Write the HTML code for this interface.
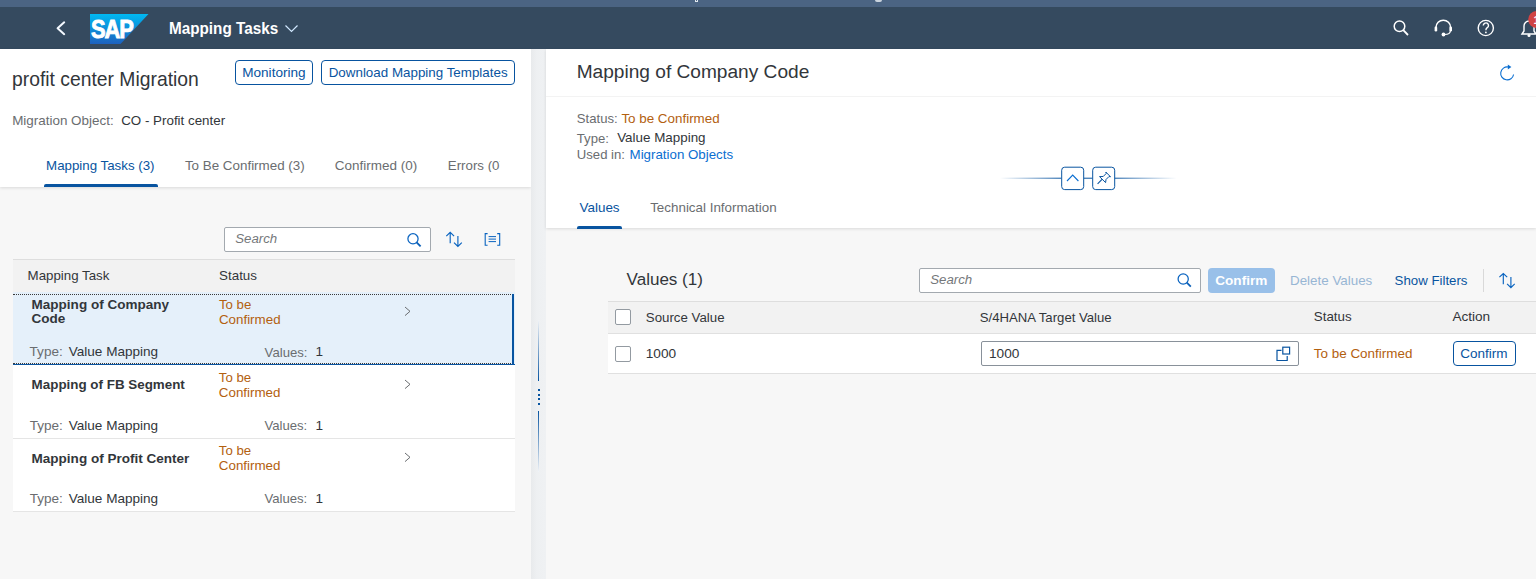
<!DOCTYPE html>
<html><head><meta charset="utf-8">
<style>
html,body{margin:0;padding:0}
body{width:1536px;height:579px;overflow:hidden;position:relative;background:#f7f7f7;font-family:"Liberation Sans",sans-serif}
.a{position:absolute;box-sizing:border-box}
.t{position:absolute;white-space:pre;line-height:1;font-family:"Liberation Sans",sans-serif}
svg{position:absolute;overflow:visible}
</style></head><body>
<!-- top strip & shell bar -->
<div class="a" style="left:0;top:0;width:1536px;height:7px;background:#4b6483"></div>
<div class="a" style="left:695px;top:0;width:3px;height:2px;border:1px solid #dfe6ee;border-top:0"></div>
<div class="a" style="left:875px;top:0;width:7px;height:2px;background:#c9d3de;border-radius:0 0 3px 3px"></div>
<div class="a" style="left:0;top:7px;width:1536px;height:42px;background:#354a5f"></div>
<svg style="left:0;top:0" width="1536" height="49">
  <polyline points="64.2,22.3 57.6,28.3 64.2,34.2" fill="none" stroke="#f4f9ff" stroke-width="2" stroke-linecap="round" stroke-linejoin="round"/>
  <defs><linearGradient id="sapg" x1="0" y1="0" x2="0" y2="1">
    <stop offset="0" stop-color="#00b9f2"/><stop offset="1" stop-color="#1d61bf"/></linearGradient></defs>
  <polygon points="90,14 148.5,14 120.5,44 90,44" fill="url(#sapg)"/>
  <text x="91" y="38.3" font-family="Liberation Sans" font-weight="700" font-size="25.5" fill="#fff" stroke="#fff" stroke-width="0.9" letter-spacing="-1.2" transform="translate(91,0) scale(0.86,1) translate(-91,0)">SAP</text>
  <polyline points="285.5,25.5 291.5,31.5 297.5,25.5" fill="none" stroke="#d1e8ff" stroke-width="1.2"/>
  <!-- search -->
  <circle cx="1399.5" cy="26.3" r="5.3" fill="none" stroke="#fff" stroke-width="1.5"/>
  <line x1="1403.3" y1="30.2" x2="1408" y2="35" stroke="#fff" stroke-width="1.8"/>
  <!-- headset -->
  <path d="M1436,30 L1436,27.5 A7.3,7.3 0 0 1 1450.6,27.5 L1450.6,30" fill="none" stroke="#fff" stroke-width="1.5"/>
  <rect x="1434.6" y="26.5" width="2.6" height="5" rx="1.2" fill="#fff"/>
  <rect x="1449.4" y="26.5" width="2.6" height="5" rx="1.2" fill="#fff"/>
  <path d="M1450.3,31 Q1450.3,34.5 1444.5,34.5" fill="none" stroke="#fff" stroke-width="1.2"/>
  <circle cx="1443.5" cy="34.5" r="1.9" fill="#fff"/>
  <!-- help -->
  <circle cx="1485.8" cy="28" r="7.6" fill="none" stroke="#fff" stroke-width="1.4"/>
  <path d="M1483.3,25.6 A2.6,2.6 0 1 1 1487.3,27.7 Q1485.9,28.6 1485.9,30.3" fill="none" stroke="#fff" stroke-width="1.4"/>
  <circle cx="1485.9" cy="32.4" r="0.9" fill="#fff"/>
  <!-- bell -->
  <path d="M1522,34 L1524,31 L1524,26 A5,5 0 0 1 1534,26 L1534,31 L1536,34 Z" fill="none" stroke="#fff" stroke-width="1.4"/>
  <circle cx="1529" cy="35.5" r="1.5" fill="#fff"/>
  <circle cx="1536.6" cy="19.5" r="8.4" fill="#d04343"/>
  <text x="1533.6" y="23.6" font-family="Liberation Sans" font-weight="700" font-size="11" fill="#fff">1</text>
</svg>

<!-- LEFT PANEL -->
<div class="a" style="left:0;top:49px;width:531px;height:138px;background:#fff;box-shadow:0 1px 3px rgba(0,0,0,.12)"></div>
<div class="a" style="left:235px;top:60px;width:78px;height:25px;border:1px solid #0854a0;border-radius:4px;background:#fff"></div>
<div class="a" style="left:321px;top:60px;width:194px;height:25px;border:1px solid #0854a0;border-radius:4px;background:#fff"></div>
<div class="a" style="left:43.5px;top:184px;width:114px;height:3px;background:#0854a0;border-radius:2px 2px 0 0"></div>
<!-- splitter -->
<div class="a" style="left:530.5px;top:49px;width:15.5px;height:530px;background:linear-gradient(90deg,#e8eaec,#eef0f2 40%,#eff1f3)"></div>
<div class="a" style="left:538px;top:320px;width:1px;height:61px;background:linear-gradient(#f0f3f7,#0854a0)"></div>
<div class="a" style="left:538px;top:411px;width:1px;height:61px;background:linear-gradient(#0854a0,#f0f3f7)"></div>
<div class="a" style="left:537.6px;top:389px;width:2px;height:2px;background:#0854a0"></div>
<div class="a" style="left:537.6px;top:393.5px;width:2px;height:2px;background:#0854a0"></div>
<div class="a" style="left:537.6px;top:398px;width:2px;height:2px;background:#0854a0"></div>
<div class="a" style="left:537.6px;top:402.5px;width:2px;height:2px;background:#0854a0"></div>
<!-- left search + icons -->
<div class="a" style="left:224px;top:226.5px;width:206.5px;height:25px;border:1px solid #a3a9af;border-radius:2px;background:#fff"></div>

<!-- left table -->
<div class="a" style="left:13px;top:259px;width:502px;height:34px;background:#f2f2f2;border-top:1px solid #dedede;border-bottom:1px solid #e0e0e0"></div>
<div class="a" style="left:13px;top:292px;width:502px;height:74px;background:#e5f0fa"></div>
<div class="a" style="left:13px;top:294px;width:500px;height:0;border-top:1px dotted #3a3a3a"></div>
<div class="a" style="left:13px;top:363px;width:500px;height:0;border-top:1px dotted #3a3a3a"></div>
<div class="a" style="left:13px;top:364px;width:502px;height:1px;background:#0854a0"></div>
<div class="a" style="left:512px;top:294px;width:2px;height:70px;background:#0854a0"></div>
<div class="a" style="left:13px;top:365px;width:502px;height:74px;background:#fff;border-bottom:1px solid #e5e5e5"></div>
<div class="a" style="left:13px;top:439px;width:502px;height:73px;background:#fff;border-bottom:1px solid #e5e5e5"></div>

<svg style="left:0;top:0" width="540" height="520">
  <circle cx="413" cy="238.8" r="5.1" fill="none" stroke="#0a64c0" stroke-width="1.25"/>
  <line x1="416.6" y1="242.4" x2="420.6" y2="246.4" stroke="#0a5fb8" stroke-width="1.8"/>
  <!-- sort -->
  <path d="M450.2,243.3 L450.2,232.3 M446.3,236.2 L450.2,232.3 L454.1,236.2" fill="none" stroke="#0a64c0" stroke-width="1.15"/>
  <path d="M457.9,235.9 L457.9,246.3 M454,242.6 L457.9,246.5 L461.8,242.6" fill="none" stroke="#0a64c0" stroke-width="1.15"/>
  <!-- group -->
  <path d="M487.6,233.6 L485.2,233.6 L485.2,245.2 L487.6,245.2 M497.2,233.6 L499.7,233.6 L499.7,245.2 L497.2,245.2" fill="none" stroke="#0a64c0" stroke-width="1.1"/>
  <path d="M488.6,236.6 H496 M488.6,239.1 H496 M488.6,241.6 H496" fill="none" stroke="#0a64c0" stroke-width="1"/>
  <!-- chevrons -->
  <polyline points="405,307 410,311.3 405,315.6" fill="none" stroke="#6a6d70" stroke-width="1"/>
  <polyline points="405,380 410,384.3 405,388.6" fill="none" stroke="#6a6d70" stroke-width="1"/>
  <polyline points="405,453 410,457.3 405,461.6" fill="none" stroke="#6a6d70" stroke-width="1"/>
</svg>
<!-- RIGHT PANEL -->
<div class="a" style="left:546px;top:49px;width:990px;height:179px;background:#fff;box-shadow:0 1px 3px rgba(0,0,0,.12)"></div>
<div class="a" style="left:546px;top:95.5px;width:990px;height:1px;background:#f3f3f3"></div>
<svg style="left:0;top:0" width="1536" height="579">
  <!-- refresh -->
  <path d="M1508.3,67 A6.5,6.5 0 1 0 1513.6,74.5" fill="none" stroke="#0a6ed1" stroke-width="1.1"/>
  <path d="M1507.8,64.6 L1511.4,67 L1507.8,69.4 Z" fill="#0a6ed1"/>
  <!-- collapse line -->
  <defs>
    <linearGradient id="lg1" x1="0" x2="1"><stop offset="0" stop-color="#0854a0" stop-opacity="0"/><stop offset="1" stop-color="#0854a0"/></linearGradient>
    <linearGradient id="lg2" x1="0" x2="1"><stop offset="0" stop-color="#0854a0"/><stop offset="1" stop-color="#0854a0" stop-opacity="0"/></linearGradient>
  </defs>
  <rect x="1000" y="177.7" width="61.5" height="1" fill="url(#lg1)"/>
  <rect x="1083.5" y="177.7" width="9" height="1" fill="#0854a0"/>
  <rect x="1114.5" y="177.7" width="62" height="1" fill="url(#lg2)"/>
  <rect x="1061.7" y="167.2" width="22" height="22.4" rx="3" fill="#fff" stroke="#0854a0" stroke-width="1"/>
  <rect x="1092.7" y="167.2" width="22" height="22.4" rx="3" fill="#fff" stroke="#0854a0" stroke-width="1"/>
  <polyline points="1067,181 1072.7,175 1078.4,181" fill="none" stroke="#0a6ed1" stroke-width="1.1"/>
  <!-- pin -->
  <path d="M1097.6,183.8 L1102,179.4" stroke="#0854a0" stroke-width="1.1"/>
  <path d="M1099.5,176.6 L1105.6,182.6 L1106,179.5 L1109,176.5 L1110.5,176.8 L1105.8,172 L1106.2,173.5 L1103.2,176.5 Z" fill="none" stroke="#0854a0" stroke-width="1"/>
</svg>
<div class="a" style="left:577px;top:226px;width:45px;height:2.5px;background:#0854a0;border-radius:2px 2px 0 0"></div>

<!-- right toolbar -->
<div class="a" style="left:919px;top:267.7px;width:281.5px;height:25px;border:1px solid #a3a9af;border-radius:2px;background:#fff"></div>
<div class="a" style="left:1208px;top:268px;width:67px;height:25px;border-radius:4px;background:#99c0e9"></div>
<div class="a" style="left:1483px;top:268.5px;width:1px;height:23px;background:#d9d9d9"></div>
<svg style="left:0;top:0" width="1536" height="579">
  <circle cx="1183.2" cy="279" r="5.1" fill="none" stroke="#0a64c0" stroke-width="1.25"/>
  <line x1="1186.8" y1="282.6" x2="1190.8" y2="286.6" stroke="#0a5fb8" stroke-width="1.8"/>
  <path d="M1503.3,284.2 L1503.3,273.8 M1499.4,277.2 L1503.3,273.6 L1507.2,277.2" fill="none" stroke="#0a64c0" stroke-width="1.15"/>
  <path d="M1510.9,277 L1510.9,287.4 M1507.1,283.9 L1510.9,287.6 L1514.7,283.9" fill="none" stroke="#0a64c0" stroke-width="1.15"/>
</svg>
<!-- right table -->
<div class="a" style="left:607.5px;top:301px;width:929px;height:33px;background:#f2f2f2;border-top:1px solid #dedede;border-bottom:1px solid #e0e0e0"></div>
<div class="a" style="left:607.5px;top:334px;width:929px;height:40px;background:#fff;border-bottom:1px solid #e0e0e0"></div>
<div class="a" style="left:615px;top:309.4px;width:15.6px;height:15.4px;border:1px solid #939aa1;border-radius:2px;background:#fff"></div>
<div class="a" style="left:615px;top:346.4px;width:15.6px;height:15.4px;border:1px solid #939aa1;border-radius:2px;background:#fff"></div>
<div class="a" style="left:981px;top:341.3px;width:318px;height:24.5px;border:1px solid #89919a;border-radius:2px;background:#fff"></div>
<svg style="left:0;top:0" width="1536" height="579">
  <path d="M1281.5,350.3 L1277,350.3 L1277,360.5 L1287.2,360.5 L1287.2,356" fill="none" stroke="#0854a0" stroke-width="1.2"/>
  <rect x="1282.8" y="347.2" width="6.8" height="6.8" fill="none" stroke="#0854a0" stroke-width="1.2"/>
</svg>
<div class="a" style="left:1453px;top:341.2px;width:63px;height:24.6px;border:1px solid #0854a0;border-radius:4px;background:#fff"></div>

<div class="t" style="left:168.85px;top:20.59px;font-size:15.90px;color:#ffffff;transform:scaleX(0.9606);transform-origin:0 0;font-weight:700">Mapping Tasks</div>
<div class="t" style="left:12.04px;top:70.20px;font-size:19.32px;color:#32363a">profit center Migration</div>
<div class="t" style="left:242.18px;top:65.64px;font-size:13.60px;color:#0854a0">Monitoring</div>
<div class="t" style="left:328.70px;top:65.82px;font-size:13.39px;color:#0854a0">Download Mapping Templates</div>
<div class="t" style="left:12.19px;top:113.68px;font-size:13.43px;color:#6a6d70">Migration Object:</div>
<div class="t" style="left:121.20px;top:113.73px;font-size:13.37px;color:#32363a">CO - Profit center</div>
<div class="t" style="left:46.10px;top:159.38px;font-size:13.31px;color:#0854a0">Mapping Tasks (3)</div>
<div class="t" style="left:184.90px;top:159.31px;font-size:13.40px;color:#6a6d70">To Be Confirmed (3)</div>
<div class="t" style="left:334.79px;top:159.24px;font-size:13.48px;color:#6a6d70">Confirmed (0)</div>
<div class="t" style="left:235.20px;top:232.33px;font-size:13.26px;color:#74777a;font-style:italic">Search</div>
<div class="t" style="left:27.60px;top:268.78px;font-size:13.31px;color:#32363a">Mapping Task</div>
<div class="t" style="left:219.10px;top:268.53px;font-size:13.37px;color:#32363a">Status</div>
<div class="t" style="left:31.59px;top:297.80px;font-size:13.53px;color:#32363a;font-weight:700">Mapping of Company</div>
<div class="t" style="left:31.59px;top:312.30px;font-size:13.53px;color:#32363a;font-weight:700">Code</div>
<div class="t" style="left:218.91px;top:297.74px;font-size:13.24px;color:#b3600f">To be</div>
<div class="t" style="left:218.90px;top:312.73px;font-size:13.38px;color:#b3600f">Confirmed</div>
<div class="t" style="left:29.59px;top:345.37px;font-size:13.57px;color:#6a6d70">Type:</div>
<div class="t" style="left:68.69px;top:345.37px;font-size:13.57px;color:#32363a">Value Mapping</div>
<div class="t" style="left:264.61px;top:345.61px;font-size:13.15px;color:#6a6d70">Values:</div>
<div class="t" style="left:315.59px;top:345.27px;font-size:13.57px;color:#32363a">1</div>
<div class="t" style="left:31.60px;top:378.21px;font-size:13.40px;color:#32363a;font-weight:700">Mapping of FB Segment</div>
<div class="t" style="left:218.81px;top:370.74px;font-size:13.24px;color:#b3600f">To be</div>
<div class="t" style="left:218.80px;top:385.93px;font-size:13.38px;color:#b3600f">Confirmed</div>
<div class="t" style="left:29.69px;top:418.97px;font-size:13.57px;color:#6a6d70">Type:</div>
<div class="t" style="left:68.69px;top:418.97px;font-size:13.57px;color:#32363a">Value Mapping</div>
<div class="t" style="left:264.41px;top:419.31px;font-size:13.15px;color:#6a6d70">Values:</div>
<div class="t" style="left:315.39px;top:418.97px;font-size:13.57px;color:#32363a">1</div>
<div class="t" style="left:31.59px;top:451.79px;font-size:13.53px;color:#32363a;font-weight:700">Mapping of Profit Center</div>
<div class="t" style="left:218.81px;top:443.84px;font-size:13.24px;color:#b3600f">To be</div>
<div class="t" style="left:218.80px;top:459.33px;font-size:13.38px;color:#b3600f">Confirmed</div>
<div class="t" style="left:29.69px;top:491.87px;font-size:13.57px;color:#6a6d70">Type:</div>
<div class="t" style="left:68.69px;top:491.87px;font-size:13.57px;color:#32363a">Value Mapping</div>
<div class="t" style="left:264.41px;top:492.21px;font-size:13.15px;color:#6a6d70">Values:</div>
<div class="t" style="left:315.39px;top:491.87px;font-size:13.57px;color:#32363a">1</div>
<div class="t" style="left:576.65px;top:62.46px;font-size:19.13px;color:#32363a">Mapping of Company Code</div>
<div class="t" style="left:576.81px;top:111.93px;font-size:13.14px;color:#6a6d70">Status:</div>
<div class="t" style="left:621.40px;top:111.71px;font-size:13.40px;color:#b3600f">To be Confirmed</div>
<div class="t" style="left:576.81px;top:131.63px;font-size:13.14px;color:#6a6d70">Type:</div>
<div class="t" style="left:617.20px;top:131.41px;font-size:13.40px;color:#32363a">Value Mapping</div>
<div class="t" style="left:576.81px;top:148.33px;font-size:13.14px;color:#6a6d70">Used in:</div>
<div class="t" style="left:629.60px;top:148.18px;font-size:13.31px;color:#0a6ed1">Migration Objects</div>
<div class="t" style="left:579.49px;top:200.77px;font-size:13.44px;color:#0854a0">Values</div>
<div class="t" style="left:650.20px;top:200.83px;font-size:13.38px;color:#6a6d70">Technical Information</div>
<div class="t" style="left:626.58px;top:271.33px;font-size:17.04px;color:#32363a">Values (1)</div>
<div class="t" style="left:930.20px;top:273.43px;font-size:13.26px;color:#74777a;font-style:italic">Search</div>
<div class="t" style="left:1215.28px;top:273.54px;font-size:13.59px;color:#ffffff;font-weight:700">Confirm</div>
<div class="t" style="left:1290.00px;top:273.91px;font-size:13.39px;color:#97b6d4">Delete Values</div>
<div class="t" style="left:1394.60px;top:274.03px;font-size:13.25px;color:#0854a0">Show Filters</div>
<div class="t" style="left:645.80px;top:310.80px;font-size:13.29px;color:#32363a">Source Value</div>
<div class="t" style="left:979.81px;top:310.70px;font-size:13.17px;color:#32363a">S/4HANA Target Value</div>
<div class="t" style="left:1313.80px;top:310.43px;font-size:13.37px;color:#32363a">Status</div>
<div class="t" style="left:1452.38px;top:310.24px;font-size:13.60px;color:#32363a">Action</div>
<div class="t" style="left:645.78px;top:346.88px;font-size:13.66px;color:#32363a">1000</div>
<div class="t" style="left:988.98px;top:346.58px;font-size:13.66px;color:#32363a">1000</div>
<div class="t" style="left:1313.79px;top:347.27px;font-size:13.44px;color:#b3600f">To be Confirmed</div>
<div class="t" style="left:1460.19px;top:346.79px;font-size:13.54px;color:#0854a0">Confirm</div>
<!-- clip errors tab -->
<div class="t" id="errtab" style="left:447.8px;top:159px;font-size:13.3px;color:#6a6d70;width:52px;overflow:hidden">Errors (0)</div>
</body></html>
